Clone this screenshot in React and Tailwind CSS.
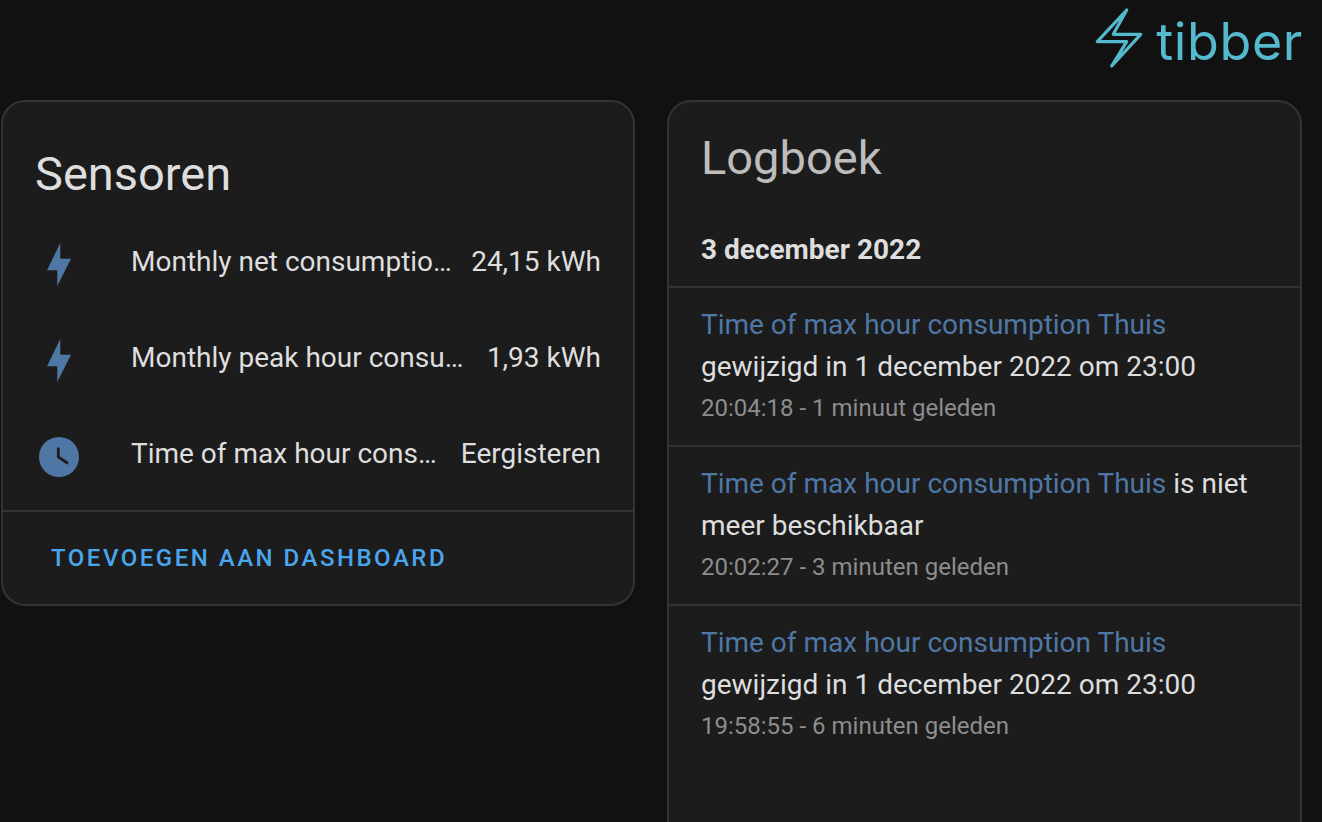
import React from 'react';

const sensors = [
  { icon: 'bolt', name: 'Monthly net consumption Thuis', value: '24,15 kWh' },
  { icon: 'bolt', name: 'Monthly peak hour consumption Thuis', value: '1,93 kWh' },
  { icon: 'clock', name: 'Time of max hour consumption Thuis', value: 'Eergisteren' },
];

const entries = [
  { text: 'gewijzigd in 1 december 2022 om 23:00', time: '20:04:18 - 1 minuut geleden' },
  { after: ' is niet', text: 'meer beschikbaar', time: '20:02:27 - 3 minuten geleden' },
  { text: 'gewijzigd in 1 december 2022 om 23:00', time: '19:58:55 - 6 minuten geleden' },
];

function BoltIcon() {
  return (
    <svg width="24" height="43" viewBox="0 0 24 43">
      <path d="M13.3 0 L0 27.3 H10.3 V43 L24 15.7 H13.3 Z" fill="#4f77a5" />
    </svg>
  );
}

function ClockIcon() {
  return (
    <svg width="40" height="40" viewBox="0 0 40 40">
      <circle cx="20" cy="20" r="20" fill="#4f77a5" />
      <path d="M19.3 10.5 V20 L29 26.5" fill="none" stroke="#1c1c1c" strokeWidth="2.8" />
    </svg>
  );
}

function Logo() {
  return (
    <div className="flex items-center justify-end h-[76px] pr-[19px]">
      <svg width="50" height="62" viewBox="0 0 50 62" className="mr-[12px]">
        <path
          d="M32.7 3 L3.3 34.7 H32.7 L17.7 59 L46.7 27.3 H19.3 Z"
          fill="none"
          stroke="#55b9cd"
          strokeWidth="3.2"
          strokeLinejoin="round"
        />
      </svg>
      <span className="mt-[7px] font-['Inter',sans-serif] font-normal text-[52px] leading-none text-[#55b9cd] tracking-[0.6px]">tibber</span>
    </div>
  );
}

export default function App() {
  return (
    <div className="h-screen overflow-hidden bg-[#111111] font-['Roboto',sans-serif]">
      <Logo />
      <div className="grid grid-cols-[634px_635px] gap-x-[32px] pl-[1px] pt-[24px] items-start">
        <div className="rounded-[24px] border-2 border-[#333333] bg-[#1c1c1c]">
          <h2 className="pl-[32px] pt-[44px] text-[47px] leading-[56px] text-[#dedede]">Sensoren</h2>
          <div className="pt-[12px] pb-[8px]">
            {sensors.map((s) => (
              <div key={s.name} className="flex items-center h-[96px] pl-[32px] pr-[32px]">
                <div className="w-[48px] pt-[5px] flex justify-center shrink-0">
                  {s.icon === 'bolt' ? <BoltIcon /> : <ClockIcon />}
                </div>
                <div className="ml-[48px] flex-1 truncate text-[28px] text-[#dedede]">{s.name}</div>
                <div className="ml-[18px] shrink-0 text-[28px] text-[#dedede]">{s.value}</div>
              </div>
            ))}
          </div>
          <div className="border-t-2 border-[#333333] h-[94px] flex items-center pl-[48px]">
            <span className="text-[24px] font-medium tracking-[2.5px] text-[#4aa6ec]">TOEVOEGEN AAN DASHBOARD</span>
          </div>
        </div>

        <div className="h-[900px] rounded-[24px] border-2 border-[#333333] bg-[#1c1c1c]">
          <h2 className="pl-[32px] pt-[28px] text-[47px] leading-[56px] text-[#bdbdbd]">Logboek</h2>
          <div className="pl-[32px] pt-[44px] pb-[16px] text-[28px] leading-[40px] font-bold text-[#dedede]">3 december 2022</div>
          {entries.map((e) => (
            <div key={e.time} className="border-t-2 border-[#333333] h-[159px] pl-[32px] pt-[16px]">
              <div className="text-[28px] leading-[42px] text-[#dedede]">
                <span className="text-[#4f77a5]">Time of max hour consumption Thuis</span>
                {e.after}
              </div>
              <div className="text-[28px] leading-[42px] text-[#dedede]">{e.text}</div>
              <div className="text-[24px] leading-[40px] text-[#8d8d8d]">{e.time}</div>
            </div>
          ))}
        </div>
      </div>
    </div>
  );
}
